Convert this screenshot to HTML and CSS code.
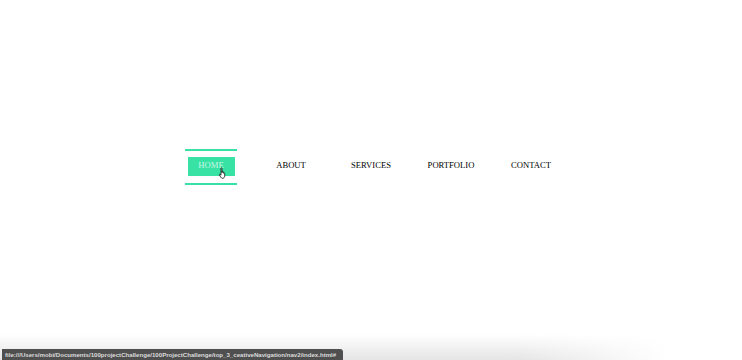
FILE: index.html
```html
<!DOCTYPE html>
<html lang="en">
<head>
  <meta charset="UTF-8">
  <title>Navigation</title>
  <link rel="stylesheet" href="styles.css">
</head>
<body>

  <nav class="menu">
    <ul>
      <li class="active">
        <a href="#">HOME</a>
        <svg class="cursor" width="10" height="12" viewBox="0 0 10 12">
          <path d="M3 1.2c0-.6.9-.6.9 0V5.5l.1-1c0-.6.9-.6.9 0v1.2c0-.6.9-.6.9 0v.8c0-.6.9-.6.9 0V9c0 1.3-.9 2.3-2.2 2.3H4.6c-.8 0-1.3-.4-1.7-1L1.3 8c-.3-.5.3-1 .8-.6L3 8.2z" fill="#fff" stroke="#111" stroke-width=".8" stroke-linejoin="round"/>
        </svg>
      </li>
      <li><a href="#">ABOUT</a></li>
      <li><a href="#">SERVICES</a></li>
      <li><a href="#">PORTFOLIO</a></li>
      <li><a href="#">CONTACT</a></li>
    </ul>
  </nav>

  <div class="shade"></div>
  <div class="status">file:///Users/mobi/Documents/100projectChallenge/100ProjectChallenge/top_3_ceativeNavigation/nav2/index.html#</div>

</body>
</html>
```

FILE: styles.css
```css
body {
  margin: 0;
  height: 360px;
  background: #fff;
  font-family: "Liberation Serif", "Times New Roman", serif;
  overflow: hidden;
}
.menu {
  padding-top: 149px;
}
.menu ul {
  list-style: none;
  margin: 0;
  padding: 0;
  display: flex;
  justify-content: center;
  gap: 28px;
}
.menu li {
  position: relative;
  width: 52px;
  height: 32px;
  border-top: 2px solid transparent;
  border-bottom: 2px solid transparent;
  display: flex;
  align-items: center;
  justify-content: center;
}
.menu a {
  display: flex;
  align-items: center;
  justify-content: center;
  width: 47px;
  height: 19px;
  margin-top: -2px;
  padding-bottom: 2px;
  box-sizing: border-box;
  color: #000;
  text-decoration: none;
  font-size: 8.6px;
}
.menu li.active {
  border-color: #38e2a4;
}
.menu li.active a {
  background: #38e2a4;
  color: #c8f7e4;
}
.cursor {
  position: absolute;
  left: 33px;
  top: 16px;
}
.shade {
  position: fixed;
  left: 0;
  bottom: 0;
  width: 742px;
  height: 26px;
  background: linear-gradient(to bottom, rgba(255,255,255,0), rgba(220,220,220,0.75));
  -webkit-mask-image: linear-gradient(to right, #000 70%, transparent 90%);
}
.status {
  position: fixed;
  left: 2px;
  bottom: 0;
  width: 341px;
  height: 11px;
  padding-left: 3px;
  box-sizing: border-box;
  background: #4f4f4f;
  border-radius: 0 3px 0 0;
  color: #dcdcdc;
  font-family: "Liberation Sans", Arial, sans-serif;
  font-size: 6.1px;
  font-weight: bold;
  line-height: 11px;
  white-space: nowrap;
}
```
